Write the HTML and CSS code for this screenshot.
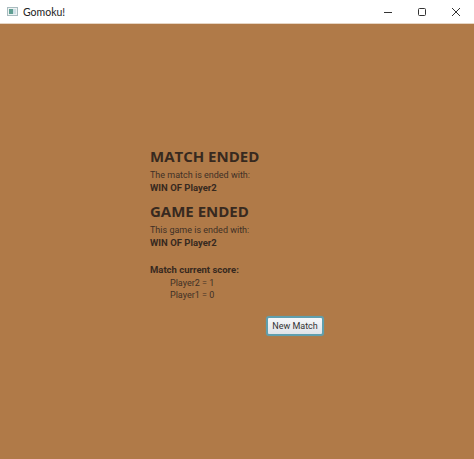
FILE: index.html
```html
<!DOCTYPE html>
<html lang="en">
<head>
    <meta charset="UTF-8">
    <meta name="viewport" content="width=device-width, initial-scale=1.0">
    <title>Gomoku!</title>
    <link rel="stylesheet" href="styles.css">
</head>
<body>
    <!-- Window title bar -->
    <header class="title-bar">
        <div class="app-title">
            <svg class="app-icon" width="11" height="11" viewBox="0 0 11 11">
                <rect x="0.5" y="1.5" width="10" height="8" fill="#eef3f3" stroke="#a9bcc0"/>
                <rect x="2" y="3" width="4" height="5" fill="#5f9f92"/>
                <rect x="6" y="3" width="3" height="5" fill="#cfe0e6"/>
            </svg>
            <span>Gomoku!</span>
        </div>
        <div class="window-buttons">
            <svg width="10" height="10" viewBox="0 0 10 10"><path d="M1 5.5H9" stroke="#333" fill="none"/></svg>
            <svg width="10" height="10" viewBox="0 0 10 10"><rect x="1.5" y="1.5" width="7" height="7" rx="1" stroke="#333" fill="none"/></svg>
            <svg width="10" height="10" viewBox="0 0 10 10"><path d="M1 1L9 9M9 1L1 9" stroke="#333" fill="none"/></svg>
        </div>
    </header>

    <!-- Result panel -->
    <main class="board">
        <div class="results">
            <h1>MATCH ENDED</h1>
            <p>The match is ended with:</p>
            <p class="winner">WIN OF Player2</p>

            <h1 class="second">GAME ENDED</h1>
            <p>This game is ended with:</p>
            <p class="winner">WIN OF Player2</p>

            <p class="score-title">Match current score:</p>
            <p class="score">Player2 = 1</p>
            <p class="score">Player1 = 0</p>

            <div class="actions">
                <button class="new-match">New Match</button>
            </div>
        </div>
    </main>
</body>
</html>
```

FILE: styles.css
```css
/* General Styles */
html, body {
    height: 100%;
}

body {
    margin: 0;
    display: flex;
    flex-direction: column;
    font-family: Roboto, "Open Sans", sans-serif;
    font-size: 9px;
    color: #3f3026;
    background-color: #b07a48;
    overflow: hidden;
}

/* Title Bar */
.title-bar {
    height: 23px;
    display: flex;
    justify-content: space-between;
    align-items: center;
    background-color: #fff;
    border-bottom: 1px solid #e6d5c4;
    color: #222;
    font-family: Lato, sans-serif;
    font-size: 10.5px;
}

.app-title {
    display: flex;
    align-items: center;
    gap: 5px;
    padding-left: 7px;
}

.window-buttons {
    display: flex;
    gap: 24px;
    padding-right: 13px;
}

/* Result Panel */
.board {
    flex: 1;
    padding: 123px 0 0 150px;
}

.results {
    width: 174px;
}

h1 {
    margin: 0 0 4px;
    height: 18px;
    line-height: 18px;
    font-family: "Open Sans", sans-serif;
    font-size: 15px;
    font-weight: 700;
    color: #37291f;
}

h1.second {
    margin-top: 8px;
}

p {
    margin: 0;
    height: 12.5px;
    line-height: 12.5px;
}

.winner,
.score-title {
    font-size: 9.5px;
    font-weight: 700;
    color: #37291f;
}

.score-title {
    margin-top: 15px;
}

.score {
    padding-left: 20px;
}

.actions {
    display: flex;
    justify-content: flex-end;
    margin-top: 14px;
}

.new-match {
    width: 58px;
    height: 20px;
    padding: 0;
    font-family: inherit;
    font-size: 9px;
    color: #333;
    background: linear-gradient(#f6f7f9, #dfe3e8);
    border: 2px solid #5f9fae;
    border-radius: 3px;
    box-shadow: 0 0 1px #5f9fae;
}
```
